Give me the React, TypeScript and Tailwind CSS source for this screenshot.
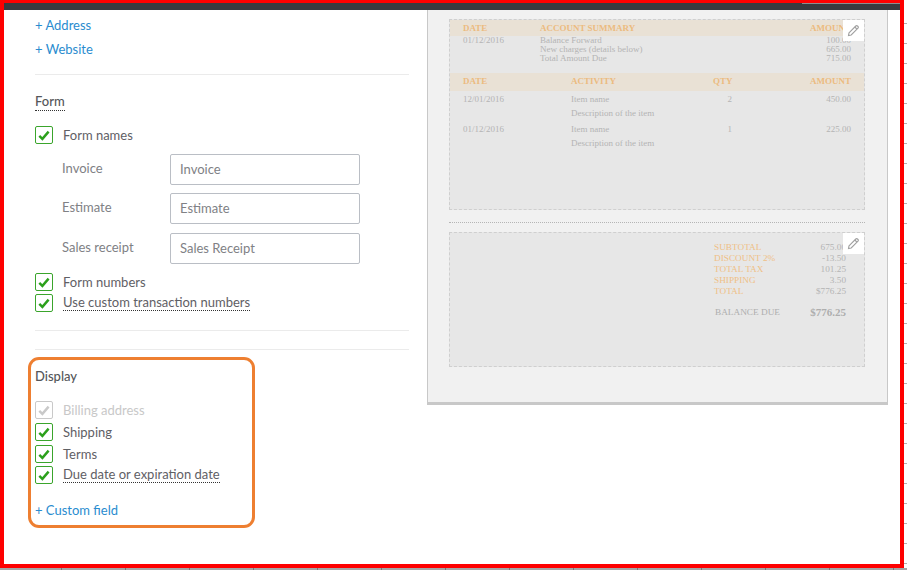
import React from "react";

const sans = "font-['Lato','Noto_Sans',sans-serif]";

function Box({ disabled }: { disabled?: boolean }) {
  return (
    <span
      className={`flex h-[18px] w-[18px] shrink-0 items-center justify-center rounded-[2px] border-[1.5px] bg-white ${
        disabled ? "border-[#c9c9c9]" : "border-[#3aa52c]"
      }`}
    >
      <svg width="12" height="11" viewBox="0 0 12 11" fill="none">
        <path
          d="M1.3 5.8 L4.4 8.9 L10.6 1.6"
          stroke={disabled ? "#c9c9c9" : "#2ca01c"}
          strokeWidth="2.4"
        />
      </svg>
    </span>
  );
}

function CheckRow({
  label,
  dotted,
  disabled,
  className = "",
}: {
  label: string;
  dotted?: boolean;
  disabled?: boolean;
  className?: string;
}) {
  return (
    <div className={`flex items-center gap-[10px] ${className}`}>
      <Box disabled={disabled} />
      <span
        className={`text-[13px] ${disabled ? "text-[#c8c8c8]" : "text-[#5f6065]"} ${
          dotted ? "border-b border-dotted border-[#333] pb-px leading-[13px]" : "leading-[18px]"
        }`}
      >
        {label}
      </span>
    </div>
  );
}

function NameField({ label, value, className = "" }: { label: string; value: string; className?: string }) {
  return (
    <div className={`flex items-start ${className}`}>
      <span className="ml-[27px] mt-[5px] w-[108px] text-[13px] leading-[18px] text-[#808185]">{label}</span>
      <div className="flex h-[31px] w-[190px] items-center rounded-[2px] border border-[#babec5] pl-[9px] text-[13px] text-[#808185]">
        {value}
      </div>
    </div>
  );
}

function Pencil() {
  return (
    <div className="absolute right-0 top-0 flex h-[21px] w-[21px] items-center justify-center bg-white">
      <svg width="13" height="13" viewBox="0 0 13 13" fill="none" stroke="#a0a0a0" strokeWidth="1.1">
        <path d="M2 8.8 L8.8 2 a1.2 1.2 0 0 1 1.7 0 L11 2.5 a1.2 1.2 0 0 1 0 1.7 L4.2 11 L1.5 11.5 Z" />
        <path d="M7.8 3 L10 5.2" />
      </svg>
    </div>
  );
}

const band = "grid items-center bg-[#e9e1d5] px-[13px] text-[9px] font-bold text-[#ecbb80]";

export default function App() {
  return (
    <div className="relative h-[570px] w-[907px] overflow-hidden bg-[#a5a5a5]">
      <div className="flex">
        <div className={`h-[568px] w-[904px] border-b-4 border-l-4 border-r-4 border-t-[3px] border-[#fe0000] bg-white ${sans}`}>
          <div className="flex h-[7px] justify-end bg-[#393a3f]">
            <div className="h-px w-[98px] bg-[#8d8d90]" />
          </div>
          <div className="flex">
            <div className="w-[423px] pl-[31px]">
              <div className="w-[374px]">
                <div className="pt-[6px] text-[13px] leading-[18px] text-[#2a8ccf]">
                  <div>+ Address</div>
                  <div className="mt-[6px]">+ Website</div>
                </div>
                <div className="mt-[16px] border-t border-[#ebebeb]" />
                <div className="mt-[13px]">
                  <span className="border-b border-dotted border-[#333] pb-px text-[13px] font-medium leading-[18px] text-[#55565a]">
                    Form
                  </span>
                </div>
                <CheckRow label="Form names" className="mt-[14px]" />
                <NameField label="Invoice" value="Invoice" className="mt-[10px]" />
                <NameField label="Estimate" value="Estimate" className="mt-[8px]" />
                <NameField label="Sales receipt" value="Sales Receipt" className="mt-[9px]" />
                <CheckRow label="Form numbers" className="mt-[9px]" />
                <CheckRow label="Use custom transaction numbers" dotted className="mt-[3px]" />
                <div className="mt-[18px] border-t border-[#ebebeb]" />
                <div className="mt-[18px] border-t border-[#ebebeb]" />
              </div>
              <div className="-ml-[7px] mt-[7px] h-[171px] w-[227px] rounded-[11px] border-[3px] border-[#ee7f31] pl-[4px] pt-[7px]">
                <div className="text-[13px] font-medium leading-[18px] text-[#55565a]">Display</div>
                <CheckRow label="Billing address" disabled className="mt-[16px]" />
                <CheckRow label="Shipping" className="mt-[4px]" />
                <CheckRow label="Terms" className="mt-[4px]" />
                <CheckRow label="Due date or expiration date" dotted className="mt-[3px]" />
                <div className="mt-[17px] text-[13px] leading-[18px] text-[#2a8ccf]">+ Custom field</div>
              </div>
            </div>

            <div className="h-[395px] w-[461px] border-x border-b-[3px] border-x-[#c8c8c8] border-b-[#c8c8c8] bg-[#f1f1f1] pl-[21px] pt-[9px] font-['Liberation_Serif',serif]">
              <div className="relative h-[191px] w-[416px] border border-dashed border-[#cfcfcf] bg-[#e7e7e7] text-[9px] leading-[9px] text-[#b4b4b4]">
                <div className={`${band} h-[16px] grid-cols-[77px_1fr_auto]`}>
                  <span>DATE</span>
                  <span>ACCOUNT SUMMARY</span>
                  <span>AMOUNT</span>
                </div>
                <div className="grid grid-cols-[77px_1fr_auto] px-[13px]">
                  <span>01/12/2016</span>
                  <span>
                    Balance Forward
                    <br />
                    New charges (details below)
                    <br />
                    Total Amount Due
                  </span>
                  <span className="text-right">
                    100.00
                    <br />
                    665.00
                    <br />
                    715.00
                  </span>
                </div>
                <div className={`${band} mt-[10px] h-[18px] grid-cols-[108px_142px_19px_1fr] pb-px`}>
                  <span>DATE</span>
                  <span>ACTIVITY</span>
                  <span>QTY</span>
                  <span className="text-right">AMOUNT</span>
                </div>
                <div className="mt-[1px] grid grid-cols-[108px_142px_19px_1fr] px-[13px] leading-[14px]">
                  <span>12/01/2016</span>
                  <span>
                    Item name
                    <br />
                    Description of the item
                  </span>
                  <span className="text-right">2</span>
                  <span className="text-right">450.00</span>
                </div>
                <div className="mt-[2px] grid grid-cols-[108px_142px_19px_1fr] px-[13px] leading-[14px]">
                  <span>01/12/2016</span>
                  <span>
                    Item name
                    <br />
                    Description of the item
                  </span>
                  <span className="text-right">1</span>
                  <span className="text-right">225.00</span>
                </div>
                <Pencil />
              </div>
              <div className="mt-[12px] w-[416px] border-t border-dotted border-[#b5b5b5]" />
              <div className="relative mt-[9px] h-[135px] w-[416px] border border-dashed border-[#cfcfcf] bg-[#e7e7e7] pl-[264px] pr-[18px] pt-[9px] text-[9.25px] leading-[11px]">
                {[
                  ["SUBTOTAL", "675.00"],
                  ["DISCOUNT 2%", "-13.50"],
                  ["TOTAL TAX", "101.25"],
                  ["SHIPPING", "3.50"],
                  ["TOTAL", "$776.25"],
                ].map(([k, v]) => (
                  <div key={k} className="flex justify-between">
                    <span className="text-[#efbf86]">{k}</span>
                    <span className="text-[#b4b4b4]">{v}</span>
                  </div>
                ))}
                <div className="mt-[10px] flex items-center justify-between pl-px text-[#aeaeae]">
                  <span>BALANCE DUE</span>
                  <span className="text-[11px] font-bold">$776.25</span>
                </div>
                <Pencil />
              </div>
            </div>
          </div>
        </div>
        <div className="h-[568px] w-[3px] bg-white bg-[repeating-linear-gradient(to_bottom,#ffffff_0,#ffffff_19px,#b0b0b0_19px,#b0b0b0_20px)] bg-[position:0_4px]" />
      </div>
      <div className="h-[2px] bg-[repeating-linear-gradient(to_right,#a5a5a5_0,#a5a5a5_63px,#777_63px,#777_64px)] bg-[position:-2px_0]" />
    </div>
  );
}
